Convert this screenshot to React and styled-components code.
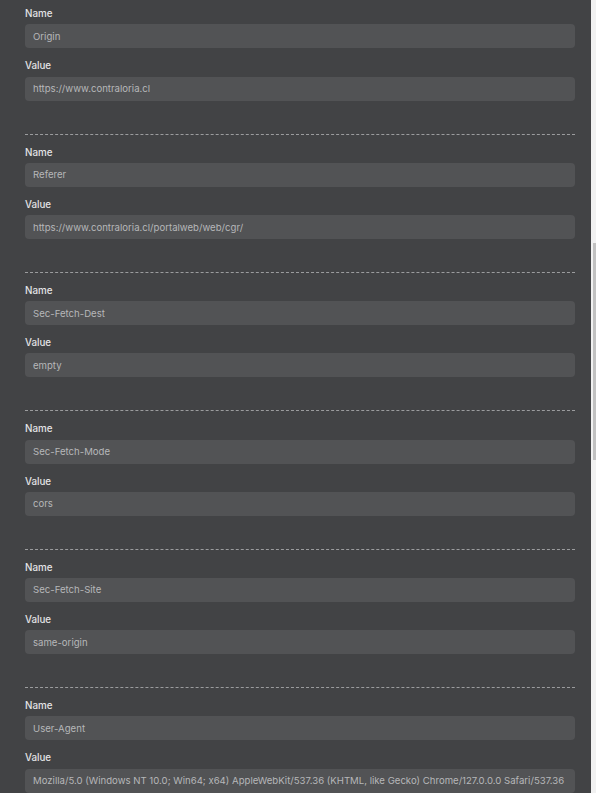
import React, { useLayoutEffect, useRef } from "react";
import styled, { createGlobalStyle } from "styled-components";

const Global = createGlobalStyle`
  html, body { margin: 0; padding: 0; background: #424345; }
  body { font-family: Inter, "Noto Sans", sans-serif; overflow: hidden; }
`;

const Frame = styled.div`
  display: flex;
  height: 100vh;
  background: #424345;
`;

const Scroller = styled.div`
  flex: 1;
  min-width: 0;
  overflow-y: scroll;
  scrollbar-width: none;
  &::-webkit-scrollbar { display: none; }
`;

const Track = styled.div`
  width: 5px;
  flex: none;
  box-sizing: border-box;
  padding-left: 2px;
  background: #f1f1f1;
`;

const Thumb = styled.div`
  margin-top: 243px;
  height: 217px;
  background: #c1c1c1;
`;

const List = styled.div`
  padding: 51px 16px 77px 25px;
  display: flex;
  flex-direction: column;
`;

const Group = styled.div`
  display: flex;
  flex-direction: column;
  padding: 10px 0 33px;
  border-top: 1px dashed #9b9c9e;
  &:first-child { border-top-color: transparent; }
`;

const Field = styled.div`
  display: flex;
  flex-direction: column;
  gap: 3.2px;
  & + & { margin-top: 10px; }
`;

const Label = styled.label`
  font-size: 9.8px;
  line-height: 15px;
  font-weight: 500;
  color: #e4e4e5;
`;

const Input = styled.input`
  box-sizing: border-box;
  width: 100%;
  height: 24px;
  padding: 0 8px;
  border: none;
  outline: none;
  border-radius: 4px;
  background: #525355;
  color: #b6b7b9;
  font-family: Inter, "Noto Sans", sans-serif;
  font-size: 9.6px;
`;

const headers = [
  ["Accept", "*/*"],
  ["Accept-Encoding", "gzip, deflate, br, zstd"],
  ["Accept-Language", "es-ES,es;q=0.9"],
  ["Connection", "keep-alive"],
  ["Content-Type", "application/x-www-form-urlencoded; charset=UTF-8"],
  ["Host", "www.contraloria.cl"],
  ["Origin", "https://www.contraloria.cl"],
  ["Referer", "https://www.contraloria.cl/portalweb/web/cgr/"],
  ["Sec-Fetch-Dest", "empty"],
  ["Sec-Fetch-Mode", "cors"],
  ["Sec-Fetch-Site", "same-origin"],
  [
    "User-Agent",
    "Mozilla/5.0 (Windows NT 10.0; Win64; x64) AppleWebKit/537.36 (KHTML, like Gecko) Chrome/127.0.0.0 Safari/537.36",
  ],
  ["X-Requested-With", "XMLHttpRequest"],
  ["sec-ch-ua", '"Not)A;Brand";v="99", "Google Chrome";v="127", "Chromium";v="127"'],
  ["sec-ch-ua-mobile", "?0"],
  ["sec-ch-ua-platform", '"Windows"'],
  ["Priority", "u=1, i"],
  ["Cache-Control", "no-cache"],
  ["Pragma", "no-cache"],
  ["DNT", "1"],
];

export default function App() {
  const scrollRef = useRef(null);
  const anchorRef = useRef(null);

  useLayoutEffect(() => {
    if (scrollRef.current && anchorRef.current) {
      scrollRef.current.scrollTop =
        anchorRef.current.offsetTop - scrollRef.current.offsetTop + 5;
    }
  }, []);

  return (
    <>
      <Global />
      <Frame>
        <Scroller ref={scrollRef}>
          <List>
            {headers.map(([name, value]) => (
              <Group key={name} ref={name === "Origin" ? anchorRef : undefined}>
                <Field>
                  <Label>Name</Label>
                  <Input readOnly value={name} />
                </Field>
                <Field>
                  <Label>Value</Label>
                  <Input readOnly value={value} />
                </Field>
              </Group>
            ))}
          </List>
        </Scroller>
        <Track>
          <Thumb />
        </Track>
      </Frame>
    </>
  );
}
